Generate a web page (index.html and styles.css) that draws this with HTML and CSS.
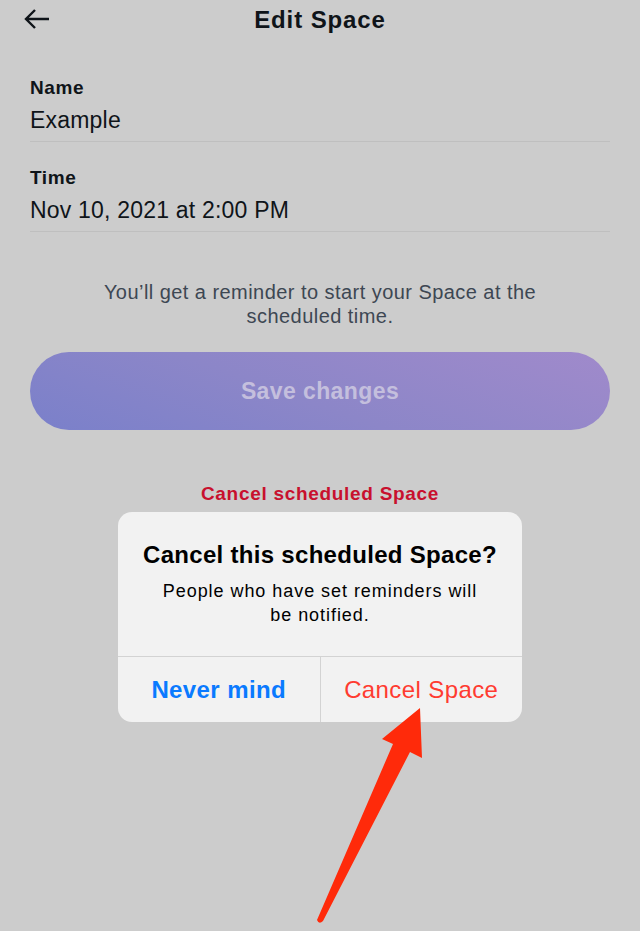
FILE: index.html
```html
<!DOCTYPE html>
<html lang="en">
<head>
  <meta charset="UTF-8">
  <title>Edit Space</title>
  <link rel="stylesheet" href="styles.css">
</head>
<body>
  <div class="topbar">
    <svg class="back" width="28" height="22" viewBox="0 0 28 22"><path d="M26 11H3M12 2L3 11l9 9" fill="none" stroke="#0f1419" stroke-width="2.4"/></svg>
    <h1>Edit Space</h1>
  </div>

  <div class="form">
    <div class="field">
      <div class="label">Name</div>
      <div class="value">Example</div>
    </div>
    <div class="field">
      <div class="label">Time</div>
      <div class="value">Nov 10, 2021 at 2:00 PM</div>
    </div>

    <p class="hint">You’ll get a reminder to start your Space at the<br>scheduled time.</p>

    <div class="save">Save changes</div>

    <div class="cancel-link">Cancel scheduled Space</div>
  </div>

  <div class="alert">
    <div class="alert-body">
      <div class="alert-title">Cancel this scheduled Space?</div>
      <div class="alert-msg">People who have set reminders will<br>be notified.</div>
    </div>
    <div class="alert-actions">
      <div class="act blue">Never mind</div>
      <div class="act red">Cancel Space</div>
    </div>
  </div>

  <svg class="pointer" width="640" height="931" viewBox="0 0 640 931">
    <path d="M420 708 L422 758 L410 752 L323 921 Q319 925 317 920 L393 744 L382 739 Z" fill="#ff2a0a"/>
  </svg>
</body>
</html>
```

FILE: styles.css
```css
body { margin: 0; background: #cccccc; font-family: "Liberation Sans", Arial, sans-serif; color: #0f1419; width: 640px; height: 931px; overflow: hidden; position: relative; }

.topbar { height: 40px; display: flex; align-items: center; justify-content: center; position: relative; }
.topbar .back { position: absolute; left: 23px; top: 8px; }
.topbar h1 { margin: 0; font-size: 24px; font-weight: bold; letter-spacing: 0.9px; }

.form { padding: 0 30px; }
.field { border-bottom: 1px solid #bfbfbf; padding-top: 36px; padding-bottom: 6px; }
.field + .field { padding-top: 24px; }
.label { font-size: 19px; font-weight: bold; line-height: 24px; letter-spacing: 0.6px; }
.value { font-size: 23px; line-height: 30px; margin-top: 5px; letter-spacing: 0.2px; }

.hint { margin: 48px 0 0; text-align: center; font-size: 20px; line-height: 24px; color: #3d4753; letter-spacing: 0.45px; }

.save { margin-top: 24px; height: 78px; border-radius: 39px; background: linear-gradient(20deg, #7a80ca 0%, #8c86c8 45%, #a08acb 100%); color: #c4bfdd; font-size: 23px; font-weight: bold; letter-spacing: 0.4px; display: flex; align-items: center; justify-content: center; }

.cancel-link { margin-top: 53px; text-align: center; color: #c8102e; font-size: 19px; font-weight: bold; letter-spacing: 0.7px; }

.alert { position: absolute; left: 118px; top: 512px; width: 404px; height: 210px; background: #f2f2f2; border-radius: 14px; display: flex; flex-direction: column; overflow: hidden; }
.alert-body { flex: 1; text-align: center; padding-top: 29px; }
.alert-title { font-size: 24px; font-weight: bold; line-height: 28px; color: #000; letter-spacing: 0.3px; }
.alert-msg { font-size: 18px; line-height: 24px; margin-top: 10px; color: #000; letter-spacing: 0.95px; }
.alert-actions { height: 65px; display: flex; border-top: 1px solid #d3d3d3; }
.act { flex: 1; display: flex; align-items: center; justify-content: center; font-size: 24px; letter-spacing: 0.4px; }
.act + .act { border-left: 1px solid #d3d3d3; }
.act.blue { color: #0a7aff; font-weight: bold; }
.act.red { color: #ff3b30; }

.pointer { position: absolute; left: 0; top: 0; }
```
